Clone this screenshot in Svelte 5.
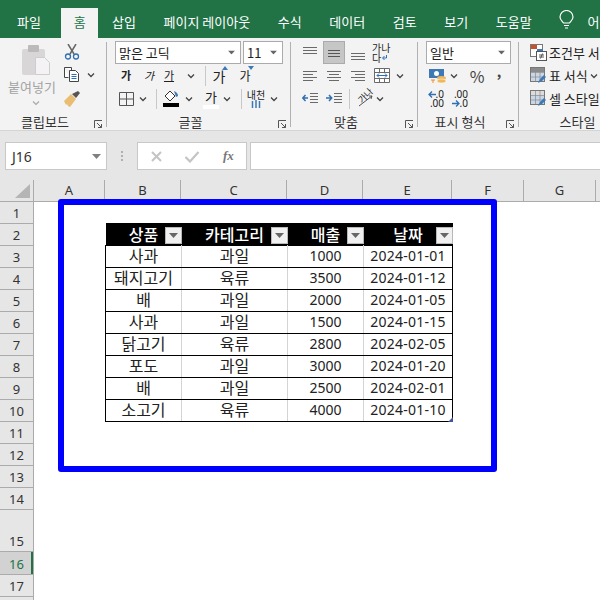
<script>
  const tabs = ['파일', '홈', '삽입', '페이지 레이아웃', '수식', '데이터', '검토', '보기', '도움말'];
  const columns = [
    ['A', 71], ['B', 76], ['C', 106], ['D', 76], ['E', 89], ['F', 72], ['G', 72], ['', 10]
  ];
  const rowHeads = [
    [1, 22], [2, 22], [3, 22], [4, 22], [5, 22], [6, 22], [7, 22], [8, 22], [9, 22], [10, 22],
    [11, 22], [12, 22], [13, 22], [14, 22], [15, 42], [16, 23], [17, 22], [18, 22]
  ];
  const heads = ['상품', '카테고리', '매출', '날짜'];
  const rows = [
    ['사과', '과일', '1000', '2024-01-01'],
    ['돼지고기', '육류', '3500', '2024-01-12'],
    ['배', '과일', '2000', '2024-01-05'],
    ['사과', '과일', '1500', '2024-01-15'],
    ['닭고기', '육류', '2800', '2024-02-05'],
    ['포도', '과일', '3000', '2024-01-20'],
    ['배', '과일', '2500', '2024-02-01'],
    ['소고기', '육류', '4000', '2024-01-10']
  ];
  const topLines = [[0, 14, 1], [0, 14, 4], [0, 14, 7]];
  const midLines = [[1, 13, 4], [1, 13, 7], [1, 13, 10]];
  const botLines = [[0, 14, 7], [0, 14, 10], [0, 14, 13]];
  const leftLines = [[0, 14, 2], [0, 10, 5], [0, 14, 8], [0, 10, 11]];
  const centerLines = [[0, 14, 2], [2, 12, 5], [0, 14, 8], [2, 12, 11]];
  const rightLines = [[0, 14, 2], [4, 14, 5], [0, 14, 8], [4, 14, 11]];
</script>

{#snippet chev()}
  <svg class="chev" width="8" height="6" viewBox="0 0 8 6"><path d="M1 1.5 4 4.5 7 1.5" fill="none" stroke="#444" stroke-width="1.3"/></svg>
{/snippet}
{#snippet drop(color = '#666')}
  <svg width="9" height="5" viewBox="0 0 9 5"><path d="M0 0h9L4.5 5z" fill={color}/></svg>
{/snippet}
{#snippet launcher()}
  <svg class="launch" width="9" height="9" viewBox="0 0 9 9"><path d="M.5 8V.5H8M3 3l4.500 4.500M7.500 4v3.500H4" fill="none" stroke="#555"/></svg>
{/snippet}
{#snippet lines(set)}
  <svg width="14" height="14" viewBox="0 0 14 14">{#each set as l}<path d="M{l[0]} {l[2] + .5}H{l[1]}" stroke="#6a6a6a"/>{/each}</svg>
{/snippet}
{#snippet tableIcon(accent)}
  <svg width="17" height="17" viewBox="0 0 17 17">
    <rect x=".5" y=".5" width="14" height="14" fill="#fff" stroke="#777"/>
    <rect x="1" y="1" width="13" height="4" fill={accent}/>
    <rect x="1" y="5" width="13" height="9" fill="#c9d6e6"/>
    <path d="M5.500 1v13M10 1v13M1 5.500h13M1 10h13" stroke="#8a8a8a" stroke-width=".7"/>
    <path d="M8 16l2-4 4-4 2 2-4 4z" fill="#3e79b5"/>
  </svg>
{/snippet}

<div class="app">
  <nav class="tabs">
    {#each tabs as tab, i}
      <span class="tab" class:active={i === 1}>{tab}</span>
    {/each}
    <svg class="bulb" width="15" height="19" viewBox="0 0 15 19"><path d="M4.500 13C3 11 1 9.500 1 7a6.500 6.500 0 0 1 13 0c0 2.500-2 4-3.500 6zM5 15.500h5M6 18h3" fill="none" stroke="#fff" stroke-width="1.200"/></svg>
    <span class="tell">어떤 작업을</span>
  </nav>

  <section class="ribbon">
    <div class="group g1">
      <div class="clip">
        <div class="paste">
          <svg width="28" height="30" viewBox="0 0 28 30">
            <rect x="0" y="4" width="23" height="26" rx="2" fill="#d9d6d8"/>
            <rect x="6" y="0" width="11" height="7" rx="1" fill="#bdbabc"/>
            <path d="M13.500 12.500h9l5 5v12h-14z" fill="#f5f2f6" stroke="#cfcccf"/>
          </svg>
          <span class="pastetext">붙여넣기</span>
          <svg width="8" height="6" viewBox="0 0 8 6"><path d="M1 1.500 4 4.500 7 1.500" fill="none" stroke="#a8a8a8" stroke-width="1.200"/></svg>
        </div>
        <div class="cliprows">
          <svg width="16" height="16" viewBox="0 0 16 16"><path d="M4 0l6 10M12 0 6 10" stroke="#666" stroke-width="1.500"/><circle cx="4" cy="12.500" r="2.500" fill="none" stroke="#2f6fb3" stroke-width="1.300"/><circle cx="12" cy="12.500" r="2.500" fill="none" stroke="#2f6fb3" stroke-width="1.300"/></svg>
          <div class="row copy">
            <svg width="16" height="15" viewBox="0 0 16 15"><path d="M.5.500h7v3M.5.500v10h4" fill="#fff" stroke="#444"/><path d="M5.500 3.500h6l3 3v8h-9z" fill="#fff" stroke="#444"/><path d="M7.500 7.500h5M7.500 9.500h5M7.500 11.500h5" stroke="#2f6fb3"/></svg>
            {@render chev()}
          </div>
          <svg class="brush" width="17" height="16" viewBox="0 0 17 16"><path d="M0 10 7 3l5 5-6 8-2-1-1-2-1 1z" fill="#e9bd72"/><path d="M8 3l4 4 4-5-2-2z" fill="#555"/></svg>
        </div>
      </div>
      <div class="label">클립보드</div>
      {@render launcher()}
    </div>

    <div class="group g2">
      <div class="rows">
        <div class="row">
          <div class="select w126"><span>맑은 고딕</span>{@render drop()}</div>
          <div class="select w40 ml2"><span class="size">11</span>{@render drop()}</div>
        </div>
        <div class="row">
          <span class="c w22 glyph bold">가</span>
          <span class="c w24 glyph italic">가</span>
          <span class="c w16 glyph under">가</span>
          <span class="c w28">{@render chev()}</span>
          <i class="sep"></i>
          <span class="c w26 big">가<svg class="tri" width="6" height="4" viewBox="0 0 6 4"><path d="M0 4 3 0l3 4z" fill="#3e79b5"/></svg></span>
          <span class="c w26 big small">가<svg class="tri" width="6" height="4" viewBox="0 0 6 4"><path d="M0 0h6L3 4z" fill="#3e79b5"/></svg></span>
        </div>
        <div class="row">
          <span class="c w22"><svg width="15" height="14" viewBox="0 0 15 14"><path d="M.5.500h14v13H.500zM7.500.5v13M.5 7h14" fill="none" stroke="#555"/></svg></span>
          <span class="c w12">{@render chev()}</span>
          <i class="sep ml7"></i>
          <span class="c w28">
            <svg width="16" height="17" viewBox="0 0 16 17"><path d="M2 6l5-5 5 5-5 5z" fill="#fff" stroke="#333"/><path d="M11 1c3 1 4 3 4 5l-2 1z" fill="#3e79b5"/><rect y="13" width="16" height="4" fill="#000"/></svg>
          </span>
          <span class="c w8">{@render chev()}</span>
          <span class="c w24 ml6 under-white">가</span>
          <span class="c w8">{@render chev()}</span>
          <i class="sep ml10"></i>
          <span class="c w28 phon">
            <span>내천</span>
            <svg width="10" height="8" viewBox="0 0 10 8"><path d="M1.500 1v7M5 0v8M8.500 1v7" stroke="#3e79b5" stroke-width="1.500"/></svg>
          </span>
          <span class="c w8">{@render chev()}</span>
        </div>
      </div>
      <div class="label">글꼴</div>
      {@render launcher()}
    </div>

    <div class="group g3">
      <div class="rows">
        <div class="row">
          <span class="c w20">{@render lines(topLines)}</span>
          <span class="c w22 ml3 selected">{@render lines(midLines)}</span>
          <span class="c w20 ml3">{@render lines(botLines)}</span>
          <span class="c w20 ml4 wrap"><span>가나</span><span>다<svg width="5" height="5" viewBox="0 0 5 5"><path d="M4.500 0v3H1M2.500 1 .5 3l2 2" fill="none" stroke="#2f6fb3"/></svg></span></span>
        </div>
        <div class="row">
          <span class="c w20">{@render lines(leftLines)}</span>
          <span class="c w20 ml4">{@render lines(centerLines)}</span>
          <span class="c w20 ml4">{@render lines(rightLines)}</span>
          <span class="c w20 ml4"><svg width="16" height="15" viewBox="0 0 16 15"><path d="M.5.500h15v14H.500zM.5 4.500h15M.5 10.500h15M5.500.5v4M10.500.5v4M5.500 10.500v4M10.500 10.500v4" fill="#fff" stroke="#6a6a6a"/><path d="M3 7.500h10M5 5.500l-2 2 2 2M11 5.500l2 2-2 2" fill="none" stroke="#2f6fb3"/></svg></span>
          <span class="c w8 ml4">{@render chev()}</span>
        </div>
        <div class="row">
          <span class="c w20"><svg width="16" height="13" viewBox="0 0 16 13"><path d="M8 1.500h8M8 4.500h8M8 7.500h8M8 10.500h8" stroke="#6a6a6a"/><path d="M6 6H1M3.500 3 .8 6l2.700 3" fill="none" stroke="#2f6fb3" stroke-width="1.500"/></svg></span>
          <span class="c w20 ml4"><svg width="16" height="13" viewBox="0 0 16 13"><path d="M8 1.500h8M8 4.500h8M8 7.500h8M8 10.500h8" stroke="#6a6a6a"/><path d="M0 6h5.500M3 3l2.700 3L3 9" fill="none" stroke="#2f6fb3" stroke-width="1.500"/></svg></span>
          <i class="sep ml5"></i>
          <span class="c w20 ml5 orient"><em>가나</em><svg width="18" height="16" viewBox="0 0 18 16"><path d="M3 15 16 5M16 5l-3 0M16 5l-1 3" fill="none" stroke="#555"/></svg></span>
          <span class="c w8 ml1">{@render chev()}</span>
        </div>
      </div>
      <div class="label">맞춤</div>
      {@render launcher()}
    </div>

    <div class="group g4">
      <div class="rows">
        <div class="row">
          <div class="select w85"><span>일반</span>{@render drop()}</div>
        </div>
        <div class="row">
          <span class="c w17 ml3"><svg width="18" height="16" viewBox="0 0 18 16"><rect x="0" y="1" width="15" height="9" fill="#3e79b5"/><circle cx="7.500" cy="5.500" r="2.500" fill="#fff"/><ellipse cx="12.500" cy="10" rx="4.500" ry="2" fill="#f0b85e"/><ellipse cx="12.500" cy="13" rx="4.500" ry="2" fill="#f0b85e" stroke="#fff" stroke-width=".5"/><path d="M2 12h4M4 12v3" stroke="#ee8a2c"/></svg></span>
          <span class="c w8 ml4">{@render chev()}</span>
          <span class="c w20 ml9 percent">%</span>
          <span class="c w12 ml6 comma">,</span>
        </div>
        <div class="row">
          <span class="c w15 ml3 dec"><span><svg width="8" height="7" viewBox="0 0 8 7"><path d="M8 3.500H1M4 .5l-3 3 3 3" fill="none" stroke="#2f6fb3" stroke-width="1.300"/></svg>.0</span><span>.00</span></span>
          <span class="c w15 ml9 dec"><span class="rt">.00</span><span><svg width="8" height="7" viewBox="0 0 8 7"><path d="M0 3.500h7M4 .5l3 3-3 3" fill="none" stroke="#2f6fb3" stroke-width="1.300"/></svg>.0</span></span>
        </div>
      </div>
      <div class="label">표시 형식</div>
      {@render launcher()}
    </div>

    <div class="group g5">
      <div class="rows">
        <div class="row style">
          <svg width="17" height="17" viewBox="0 0 17 17"><rect x=".5" y=".5" width="12" height="12" fill="#fff" stroke="#777"/><rect x="1" y="1" width="6" height="4" fill="#c8502c"/><rect x="7" y="5" width="6" height="4" fill="#3e79b5"/><rect x="6.500" y="7.500" width="10" height="9" fill="#fff" stroke="#555"/><path d="M9 11h5M9 13h5M12.500 9.500l-2 5" stroke="#333" stroke-width=".8"/></svg>
          <span>조건부 서식</span>
        </div>
        <div class="row style">
          {@render tableIcon('#8a8a8a')}
          <span>표 서식</span>
          {@render chev()}
        </div>
        <div class="row style">
          {@render tableIcon('#dcdcdc')}
          <span>셀 스타일</span>
        </div>
      </div>
      <div class="label">스타일</div>
    </div>
  </section>

  <section class="formula">
    <div class="namebox"><span>J16</span>{@render drop('#808080')}</div>
    <div class="dots"><i></i><i></i><i></i></div>
    <div class="fxbox">
      <svg width="13" height="13" viewBox="0 0 13 13"><path d="M2 2l9 9M11 2l-9 9" stroke="#c4c4c4" stroke-width="2"/></svg>
      <svg width="16" height="13" viewBox="0 0 16 13"><path d="M1.500 7l4.500 4.500L14.500 2" fill="none" stroke="#c4c4c4" stroke-width="2.200"/></svg>
      <span class="fx">fx</span>
    </div>
    <div class="input"></div>
  </section>

  <section class="colhead">
    <div class="corner"><svg width="15" height="14" viewBox="0 0 15 14"><path d="M15 0v14H0z" fill="#b5b5b5"/></svg></div>
    {#each columns as [name, width]}
      <div class="col" style:width="{width}px">{name}</div>
    {/each}
  </section>

  <section class="body">
    <div class="rowhead">
      {#each rowHeads as [n, h]}
        <div class="rh" class:current={n === 16} style:height="{h}px">{n}</div>
      {/each}
    </div>
    <div class="canvas">
      <table>
        <thead>
          <tr>
            {#each heads as h}
              <th>{h}<span class="filter"><svg width="9" height="5" viewBox="0 0 9 5"><path d="M0 0h9L4.500 5z" fill="#666"/></svg></span></th>
            {/each}
          </tr>
        </thead>
        <tbody>
          {#each rows as r}
            <tr>
              <td><div class="cell">{r[0]}</div></td><td><div class="cell">{r[1]}</div></td><td class="num"><div class="cell">{r[2]}</div></td><td class="num date"><div class="cell">{r[3]}</div></td>
            </tr>
          {/each}
        </tbody>
      </table>
      <i class="handle"></i>
      <div class="frame"></div>
    </div>
  </section>
</div>

<style>
  :global(body) { margin: 0; }
  .app {
    width: 600px; height: 600px; overflow: hidden; background: #e6e6e6;
    font-family: "Noto Sans CJK KR", "Noto Sans", sans-serif; font-size: 13px; color: #222;
  }
  svg { display: block; flex: none; }
  .tabs {
    height: 38px; box-sizing: border-box; background: #217346; display: flex; align-items: flex-end;
    padding-left: 3.200px; color: #fff; white-space: nowrap; position: relative;
  }
  .tab { height: 30px; line-height: 27px; padding: 0 13.800px; flex: none; }
  .tab.active { background: #f3f3f3; color: #217346; margin: 0 0 0 6.500px; padding: 0 12.500px; }
  .bulb { margin: 0 0 9px 14px; }
  .tell { height: 30px; line-height: 27px; margin-left: 13px; flex: none; }

  .ribbon {
    height: 93px; box-sizing: border-box; padding-top: 3px; background: #f3f3f3;
    border-bottom: 1px solid #d4d4d4; display: flex; overflow: hidden;
  }
  .group { position: relative; flex: none; height: 90px; box-sizing: border-box; }
  .group:not(.g5)::after { content: ""; position: absolute; right: 0; top: 1px; bottom: 4px; width: 1px; background: #b1b1b1; }
  .g1 { width: 107px; }
  .g2 { width: 184px; padding-left: 8px; }
  .g3 { width: 127px; padding-left: 9px; }
  .g4 { width: 101px; padding-left: 8px; }
  .g5 { width: 134px; padding-left: 11px; }
  .rows { height: 69px; display: grid; grid-template-rows: repeat(3, 23px); }
  .row { display: flex; align-items: center; height: 23px; white-space: nowrap; }
  .label {
    position: absolute; left: 0; right: 0; top: 72px; height: 18px; line-height: 18px; padding-right: 17px;
    box-sizing: border-box; text-align: center; color: #333;
  }
  .launch { position: absolute; right: 4px; top: 79px; }
  .clip { height: 69px; display: flex; }
  .paste { width: 64px; display: flex; flex-direction: column; align-items: center; padding-top: 4px; box-sizing: border-box; }
  .paste svg:first-child { margin-left: 8px; }
  .pastetext { color: #a2a2a2; line-height: 19px; margin-top: 2px; }
  .paste svg:last-child { margin-top: 4px; margin-left: 8px; }
  .cliprows { display: flex; flex-direction: column; gap: 7px; padding-top: 3px; }
  .copy { height: 15px; gap: 7px; }
  .brush { margin-top: 2px; }

  .select {
    height: 23px; box-sizing: border-box; background: #fff; border: 1px solid #ababab;
    display: flex; align-items: center; justify-content: space-between; padding: 0 4px 0 3px;
  }
  .select svg { transform: scale(.8); }
  .size { color: #222; }
  .c { display: flex; align-items: center; justify-content: center; flex: none; height: 100%; position: relative; }
  .w8 { width: 8px; } .w12 { width: 12px; } .w15 { width: 15px; } .w16 { width: 16px; } .w17 { width: 17px; }
  .w20 { width: 20px; } .w22 { width: 22px; } .w24 { width: 24px; } .w26 { width: 26px; } .w28 { width: 28px; }
  .w40 { width: 40px; } .w85 { width: 85px; } .w126 { width: 126px; }
  .ml1 { margin-left: 1px; } .ml2 { margin-left: 2px; } .ml3 { margin-left: 3px; } .ml4 { margin-left: 4px; }
  .ml5 { margin-left: 5px; } .ml6 { margin-left: 6px; } .ml7 { margin-left: 7px; } .ml9 { margin-left: 9px; } .ml10 { margin-left: 10px; }
  .sep { display: block; width: 1px; height: 20px; background: #c8c8c8; flex: none; }
  .glyph { font-size: 11px; padding-bottom: 2px; box-sizing: border-box; }
  .bold { font-weight: 700; }
  .italic { font-style: italic; }
  .under { text-decoration: underline; }
  .big { font-size: 14px; }
  .big.small { font-size: 12px; }
  .tri { position: absolute; right: 4px; top: 2px; }
  .under-white { font-size: 13px; padding-bottom: 5px; box-sizing: border-box; }
  .under-white::after { content: ""; position: absolute; left: 4px; right: 4px; bottom: 1px; height: 4px; background: #fff; }
  .phon { flex-direction: column; font-size: 10px; line-height: 11px; }
  .selected { height: 23px; box-sizing: border-box; background: #c6c6c6; border: 1px solid #ababab; }
  .selected svg path { stroke: #555; }
  .wrap { flex-direction: column; font-size: 10px; line-height: 10px; align-items: flex-start; }
  .wrap span { display: flex; align-items: center; gap: 1px; }
  .orient em { position: absolute; font-style: normal; font-size: 9px; left: 2px; top: 2px; transform: rotate(-45deg); }
  .percent { font-size: 16px; color: #444; }
  .comma { font-size: 14px; font-weight: 700; padding-bottom: 9px; box-sizing: border-box; color: #444; }
  .dec { flex-direction: column; font-size: 10px; line-height: 9px; font-family: "Noto Sans", sans-serif; align-items: flex-end; }
  .dec span { display: flex; align-items: center; }
  .style { gap: 2px; }
  .style > span { flex: none; }

  .formula { height: 39px; box-sizing: border-box; padding-top: 11px; display: flex; align-items: flex-start; }
  .namebox {
    width: 102px; height: 28px; margin-left: 5px; box-sizing: border-box; background: #fff; border: 1px solid #c8c8c8;
    display: flex; align-items: center; justify-content: space-between; padding: 0 5px 0 6px; font-size: 14px;
    font-family: "Noto Sans", sans-serif; color: #333;
  }
  .dots { width: 30px; height: 28px; display: flex; flex-direction: column; align-items: center; justify-content: center; gap: 2px; }
  .dots i { width: 2px; height: 2px; background: #b0b0b0; }
  .fxbox {
    width: 110px; height: 28px; box-sizing: border-box; background: #fff; border: 1px solid #c8c8c8;
    display: flex; align-items: center; gap: 21px; padding-left: 12px;
  }
  .fx { font: italic 700 13px "Liberation Serif", serif; color: #777; margin-left: 2px; }
  .input { flex: 1; height: 28px; margin-left: 3px; box-sizing: border-box; background: #fff; border: 1px solid #c8c8c8; border-right: 0; }

  .colhead { height: 31px; display: flex; align-items: flex-end; box-sizing: border-box; }
  .corner { width: 34px; height: 21px; flex: none; box-sizing: border-box; display: flex; justify-content: flex-end; align-items: flex-end; padding: 0 3px 3px 0; border-right: 1px solid #ababab; }
  .col {
    height: 21px; flex: none; box-sizing: border-box; border-right: 1px solid #ababab; text-align: center;
    line-height: 20px; font-family: "Noto Sans", sans-serif; font-size: 13px; color: #333;
  }
  .body { display: flex; height: 399px; background: #fff; border-top: 1px solid #ababab; box-sizing: border-box; }
  .rowhead { width: 34px; flex: none; background: #e6e6e6; border-right: 1px solid #ababab; box-sizing: border-box; }
  .rh {
    box-sizing: border-box; border-bottom: 1px solid #ababab; display: flex; align-items: flex-end; justify-content: center;
    font-family: "Noto Sans", sans-serif; font-size: 13px; color: #333; line-height: 20px;
  }
  .rh.current { background: #d2d2d2; color: #217346; box-shadow: inset -2px 0 0 #217346; }
  .canvas { position: relative; flex: 1; padding: 21px 0 0 71px; }
  table { border-collapse: collapse; table-layout: fixed; width: 347px; font-size: 16px; color: #222; }
  th:nth-child(1) { width: 76px; } th:nth-child(2) { width: 106px; } th:nth-child(3) { width: 76px; } th:nth-child(4) { width: 89px; }
  th { background: #000; color: #fff; height: 22px; padding: 0; font-weight: 500; position: relative; line-height: 22px; }
  td { height: 22px; padding: 0; box-sizing: border-box; text-align: center; border: 1px solid #000; border-left-color: #d4d4d4; border-right-color: #d4d4d4; }
  td:first-child { border-left-color: #000; }
  td:last-child { border-right-color: #000; }
  .cell { height: 21px; line-height: 19px; }
  .num { font-family: "Noto Sans", sans-serif; font-size: 14px; }
  .date { letter-spacing: .25px; }
  .filter {
    position: absolute; right: 0; top: 4px; width: 17px; height: 17px; box-sizing: border-box; background: #f0f0f0;
    border: 1px solid #b8b8b8; display: flex; align-items: center; justify-content: center;
  }
  .handle { position: absolute; left: 414px; top: 215px; width: 5px; height: 5px; background: #44549a; clip-path: polygon(100% 0, 100% 100%, 0 100%); }
  .frame {
    position: absolute; left: 24px; top: -3px; width: 439px; height: 273px; box-sizing: border-box;
    border: 6px solid #0000ff; border-radius: 3px; pointer-events: none;
  }
</style>
